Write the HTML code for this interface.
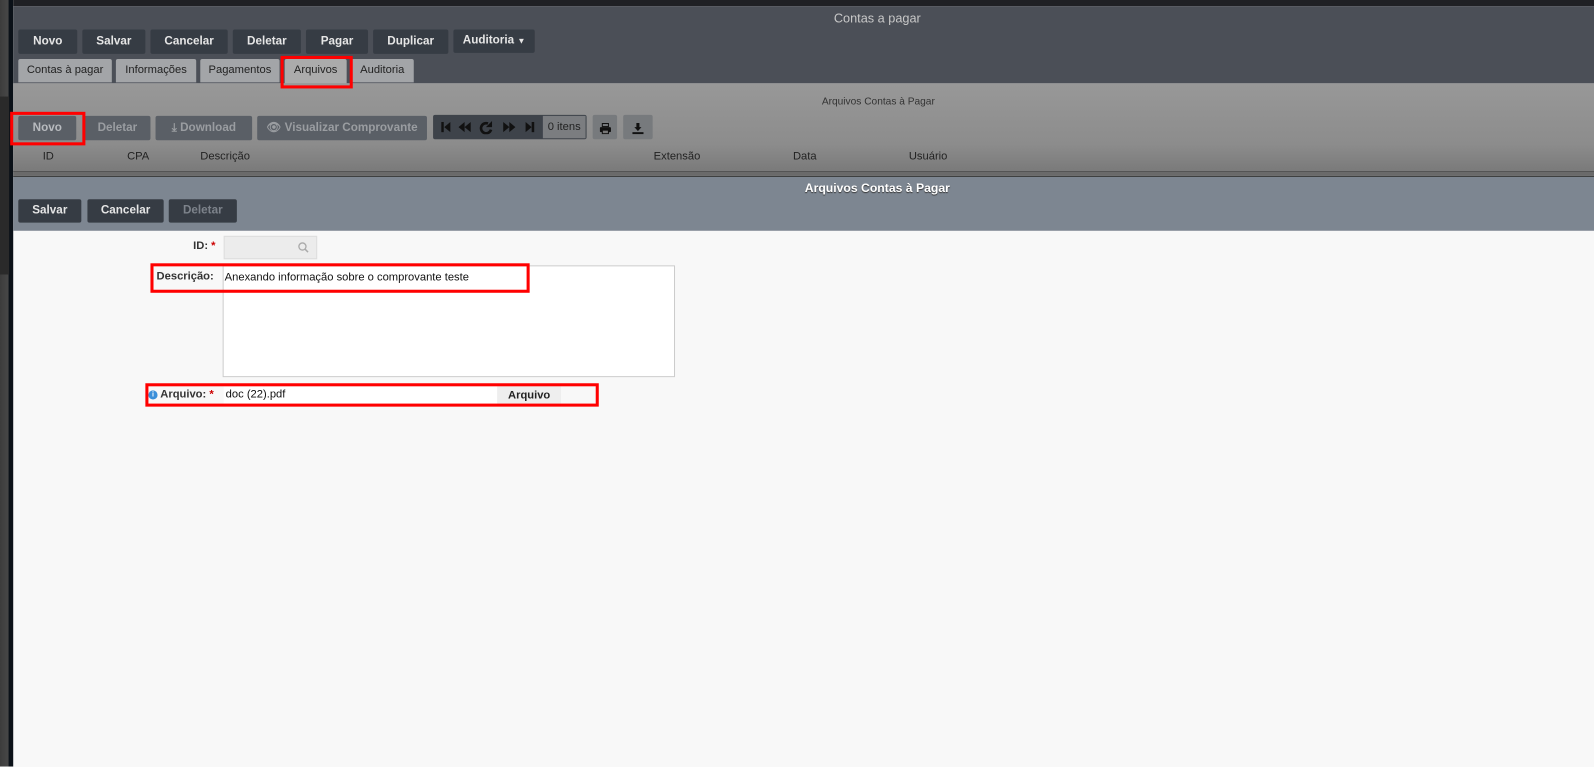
<!DOCTYPE html>
<html><head><meta charset="utf-8"><style>
*{margin:0;padding:0;box-sizing:border-box}
body{width:1594px;height:754px;overflow:hidden;background:#f8f8f8;font-family:"Liberation Sans",sans-serif;position:relative}
#w{position:absolute;left:0;top:0;width:1594px;height:754px;transform:scale(1.0166);transform-origin:0 0}
.a{position:absolute}
.btn{position:absolute;height:24px;background:#363c44;color:#e6e6e6;font-size:11.5px;font-weight:bold;text-align:center;line-height:24px;border-radius:2px}
.tab{position:absolute;top:58px;height:23px;background:#a3a5a8;color:#222;font-size:11px;text-align:center;line-height:23px;border-radius:2px 2px 0 0}
.b2{position:absolute;top:114px;height:24px;background:#5a5f66;color:#9a9da1;font-size:11.5px;font-weight:bold;text-align:center;line-height:24px;border-radius:2px}
.th{position:absolute;top:148px;font-size:11px;color:#222}
.red{position:absolute;border:3px solid #f00}
</style></head><body><div id="w">
<div class="a" style="left:0;top:0;width:13px;height:754px;background:linear-gradient(90deg,#3c3c3c,#474747 60%,#0b1118 70%,#0b1118)"></div>
<div class="a" style="left:0;top:95px;width:9px;height:175px;background:#2a2a2a"></div>
<div class="a" style="left:13px;top:0;width:1581px;height:6px;background:#1f2024"></div>
<div class="a" style="left:13px;top:6px;width:1581px;height:76px;background:#4b4f57"></div>
<div class="a" style="left:803px;top:11px;width:120px;text-align:center;color:#c8c8c8;font-size:12.5px">Contas a pagar</div>
<div class="btn" style="left:18px;top:29px;width:58px">Novo</div>
<div class="btn" style="left:81px;top:29px;width:62px">Salvar</div>
<div class="btn" style="left:148px;top:29px;width:76px">Cancelar</div>
<div class="btn" style="left:229px;top:29px;width:67px">Deletar</div>
<div class="btn" style="left:301px;top:29px;width:61px">Pagar</div>
<div class="btn" style="left:367px;top:29px;width:74px">Duplicar</div>
<div class="btn" style="left:446px;top:29px;width:80px;height:23px;line-height:22px">Auditoria <span style="font-size:8px">▼</span></div>
<div class="tab" style="left:18px;width:92px">Contas à pagar</div>
<div class="tab" style="left:114px;width:79px">Informações</div>
<div class="tab" style="left:197px;width:78px">Pagamentos</div>
<div class="tab" style="left:280px;width:61px;height:24px;background:#ababab">Arquivos</div>
<div class="tab" style="left:345px;width:62px">Auditoria</div>
<div class="a" style="left:13px;top:82px;width:1581px;height:86px;background:linear-gradient(#989898,#8c8c8c 70%,#7a7a7a)"></div>
<div class="a" style="left:804px;top:95px;width:120px;text-align:center;color:#333;font-size:10px">Arquivos Contas à Pagar</div>
<div class="b2" style="left:18px;width:57px;color:#b8bbbf">Novo</div>
<div class="b2" style="left:83px;width:65px">Deletar</div>
<div class="b2" style="left:153px;width:95px">⤓ Download</div>
<div class="b2" style="left:253px;width:167px">👁 Visualizar Comprovante</div>
<div class="a" style="left:426px;top:113px;width:151px;height:24px;background:#3e434a;border-radius:2px;padding:5px 0 0 8px">
<svg width="96" height="14" viewBox="0 0 96 14" style="fill:#111;display:block"><rect x="0" y="2" width="2.5" height="10"/><path d="M9 2L3 7l6 5z"/><path d="M23 2l-6 5 6 5zM29 2l-6 5 6 5z"/><path d="M46 3.5a5 5 0 1 0 3 6" stroke="#111" stroke-width="2.6" fill="none"/><path d="M50 1v6h-6z"/><path d="M61 2l6 5-6 5zM67 2l6 5-6 5z"/><path d="M83 2l6 5-6 5z"/><rect x="89" y="2" width="2.5" height="10"/></svg></div>
<div class="a" style="left:534px;top:114px;width:42px;height:22px;background:#7b7d80;color:#222;font-size:11px;line-height:22px;text-align:center">0 itens</div>
<div class="a" style="left:583px;top:113px;width:24px;height:24px;background:#777a7d;border-radius:2px;text-align:center;padding-top:6px"><svg width="11" height="11" viewBox="0 0 11 11"><rect x="2.5" y="0.5" width="6" height="3" fill="none" stroke="#111"/><rect x="0" y="4" width="11" height="5" rx="1" fill="#111"/><rect x="2.5" y="7" width="6" height="3.5" fill="#777" stroke="#111"/></svg></div>
<div class="a" style="left:613px;top:113px;width:29px;height:24px;background:#777a7d;border-radius:2px;text-align:center;padding-top:6px"><svg width="11" height="11" viewBox="0 0 11 11" fill="#111"><rect x="4" y="0" width="3" height="5"/><path d="M2 4h7l-3.5 4z"/><rect x="0" y="9" width="11" height="2"/></svg></div>
<div class="th" style="left:42px">ID</div>
<div class="th" style="left:125px">CPA</div>
<div class="th" style="left:197px">Descrição</div>
<div class="th" style="left:643px">Extensão</div>
<div class="th" style="left:780px">Data</div>
<div class="th" style="left:894px">Usuário</div>
<div class="a" style="left:13px;top:168px;width:1581px;height:1px;background:#333"></div>
<div class="a" style="left:13px;top:169px;width:1581px;height:4px;background:#6a6a6a"></div>
<div class="a" style="left:13px;top:173px;width:1581px;height:1px;background:#222"></div>
<div class="a" style="left:13px;top:174px;width:1581px;height:53px;background:#7d8691"></div>
<div class="a" style="left:13px;top:178px;width:1700px;text-align:center;color:#fff;font-size:12px;font-weight:bold;text-shadow:0 1px 1px #333">Arquivos Contas à Pagar</div>
<div class="btn" style="left:18px;top:196px;width:62px;height:23px;line-height:23px">Salvar</div>
<div class="btn" style="left:86px;top:196px;width:75px;height:23px;line-height:23px">Cancelar</div>
<div class="btn" style="left:166px;top:196px;width:67px;height:23px;line-height:23px;color:#7d838b">Deletar</div>
<div class="a" style="left:150px;top:236px;width:62px;text-align:right;font-size:11px;font-weight:bold;color:#333">ID: <span style="color:#c00">*</span></div>
<div class="a" style="left:220px;top:232px;width:92px;height:23px;background:#ececec;border:1px solid #ddd"></div>
<svg class="a" style="left:293px;top:238px" width="11" height="11" viewBox="0 0 11 11"><circle cx="4.5" cy="4.5" r="3.5" fill="none" stroke="#aaa" stroke-width="1.3"/><path d="M7 7l3 3" stroke="#aaa" stroke-width="1.5"/></svg>
<div class="a" style="left:219px;top:261px;width:445px;height:110px;background:#fff;border:1px solid #ccc"></div>
<div class="a" style="left:154px;top:266px;font-size:11px;font-weight:bold;color:#333">Descrição:</div>
<div class="a" style="left:221px;top:267px;font-size:11px;color:#111">Anexando informação sobre o comprovante teste</div>
<div class="red" style="left:148px;top:259px;width:373px;height:29px"></div>
<div class="a" style="left:220px;top:380px;width:332px;height:18px;background:#fff"></div>
<div class="a" style="left:489px;top:380px;width:63px;height:18px;background:#eee;font-size:11px;font-weight:bold;color:#222;text-align:center;line-height:18px">Arquivo</div>
<div class="a" style="left:146px;top:382px;font-size:11px;font-weight:bold;color:#333"><span style="display:inline-block;width:9px;height:9px;border-radius:50%;background:#3b8fd9;color:#fff;font-size:7px;text-align:center;line-height:9px;vertical-align:1px">i</span> Arquivo: <span style="color:#c00">*</span></div>
<div class="a" style="left:222px;top:382px;font-size:11px;color:#111">doc (22).pdf</div>
<div class="red" style="left:143px;top:377px;width:446px;height:23px"></div>
<div class="red" style="left:276px;top:55px;width:71px;height:32px"></div>
<div class="red" style="left:10px;top:110px;width:74px;height:33px"></div>
</div></body></html>
